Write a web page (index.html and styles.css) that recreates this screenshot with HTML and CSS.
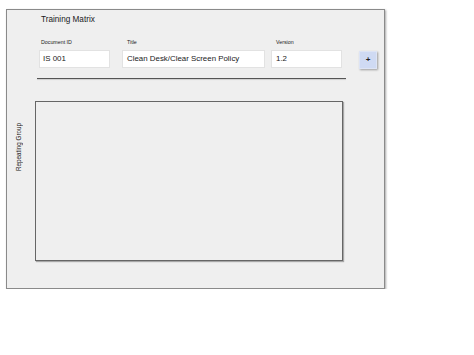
FILE: index.html
```html
<!DOCTYPE html>
<html>
<head>
<meta charset="utf-8">
<link rel="stylesheet" href="styles.css">
</head>
<body>
<div class="frame">
  <div class="title">Training Matrix</div>
  <div class="fields">
    <div class="field f-id">
      <div class="label">Document ID</div>
      <div class="input">IS 001</div>
    </div>
    <div class="field f-title">
      <div class="label">Title</div>
      <div class="input">Clean Desk/Clear Screen Policy</div>
    </div>
    <div class="field f-ver">
      <div class="label">Version</div>
      <div class="input">1.2</div>
    </div>
    <div class="add">+</div>
  </div>
  <div class="rule"></div>
  <div class="group">
    <div class="side-label">Repeating Group</div>
    <div class="group-box"></div>
  </div>
</div>
</body>
</html>
```

FILE: styles.css
```css
html, body {
  margin: 0;
  padding: 0;
  background: #ffffff;
  font-family: "Liberation Sans", Arial, sans-serif;
  color: #1a1a1a;
}

.frame {
  margin: 9px 0 0 6px;
  width: 377px;
  height: 274px;
  border: 1px solid #8a8a8a;
  background: #efefef;
  box-shadow: 1px 1px 2px rgba(0, 0, 0, 0.35);
  padding-top: 4px;
  box-sizing: content-box;
  display: flex;
  flex-direction: column;
}

.title {
  padding-left: 34px;
  font-size: 8.2px;
  line-height: 12px;
  height: 12px;
}

.fields {
  display: flex;
  align-items: flex-start;
  margin-top: 13px;
  padding-left: 32px;
}

.field {
  display: flex;
  flex-direction: column;
}

.f-id { width: 71px; }
.f-title { width: 143px; margin-left: 12px; }
.f-ver { width: 71px; margin-left: 6px; }

.label {
  font-size: 5.3px;
  line-height: 7px;
  height: 7px;
  padding-left: 5px;
  margin-bottom: 4px;
}

.f-id .label { padding-left: 2px; }

.input {
  height: 18px;
  box-sizing: border-box;
  background: #ffffff;
  border: 1px solid #e2e2e2;
  font-size: 7.9px;
  line-height: 16px;
  padding-left: 4px;
  white-space: nowrap;
  overflow: hidden;
}

.f-id .input { padding-left: 3px; }

.add {
  margin-left: 17px;
  margin-top: 12px;
  width: 18px;
  height: 18px;
  box-sizing: border-box;
  background: #cfdaf3;
  border: 1px solid #dde4f5;
  box-shadow: 1px 1px 2px rgba(0, 0, 0, 0.35);
  font-size: 8px;
  font-weight: bold;
  line-height: 16px;
  text-align: center;
  color: #222;
}

.rule {
  margin: 9px 0 0 30px;
  width: 309px;
  height: 0;
  border-top: 1px solid #555555;
  box-shadow: 0 1px 1px rgba(0, 0, 0, 0.15);
}

.group {
  display: flex;
  margin-top: 22px;
  padding-left: 8px;
}

.side-label {
  writing-mode: vertical-rl;
  transform: rotate(180deg);
  font-size: 6.3px;
  line-height: 7px;
  width: 7px;
  margin-top: 22px;
  align-self: flex-start;
  white-space: nowrap;
}

.group-box {
  margin-left: 13px;
  width: 306px;
  height: 158px;
  border: 1px solid #666666;
  box-shadow: 1px 1px 1px rgba(0, 0, 0, 0.3);
  background: #efefef;
}
```
